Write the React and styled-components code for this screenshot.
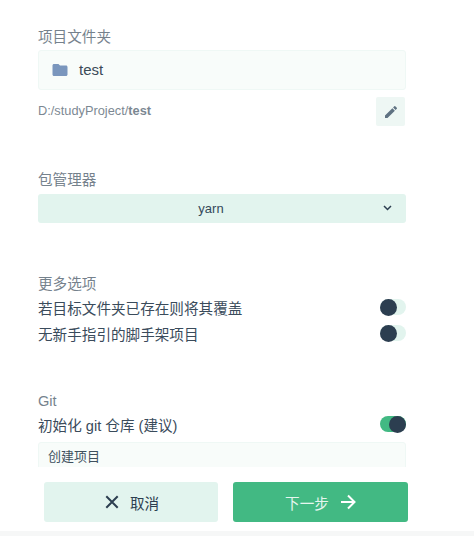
import React from 'react';
import styled, { createGlobalStyle } from 'styled-components';

const Global = createGlobalStyle`
  html, body { margin: 0; padding: 0; background: #fff; }
  body { font-family: "Liberation Sans", "Noto Sans CJK SC", sans-serif; color: #2c3e50; }
  * { box-sizing: border-box; }
`;

const Page = styled.div`
  width: 474px;
  height: 536px;
  display: flex;
  flex-direction: column;
  overflow: hidden;
`;
const Scroll = styled.div`
  height: 467px;
  overflow: hidden;
  padding: 27px 68px 0 38px;
  flex: none;
`;
const Section = styled.section`
  margin-bottom: ${p => p.$gap}px;
`;
const Label = styled.div`
  font-size: 14.6px;
  line-height: 20px;
  color: #2c3e50;
  opacity: 0.65;
  margin-bottom: ${p => p.$mb ?? 3}px;
`;
const FolderBox = styled.div`
  height: 40px;
  background: #f8fcfa;
  border: 1px solid #eff8f5;
  border-radius: 3px;
  display: flex;
  align-items: center;
  padding: 0 0 1px 12px;
  gap: 10px;
  font-size: 15px;
  color: #3a4a57;
`;
const PathRow = styled.div`
  display: flex;
  align-items: center;
  justify-content: space-between;
  margin-top: 7px;
  height: 29px;
  padding-right: 1px;
`;
const PathText = styled.div`
  font-size: 12.8px;
  color: #2c3e50;
  opacity: 0.62;
  padding-bottom: 2px;
  b { font-weight: 700; }
`;
const EditButton = styled.div`
  width: 29px;
  height: 29px;
  background: #eef7f4;
  border-radius: 2px;
  display: flex;
  align-items: center;
  justify-content: center;
`;
const Select = styled.div`
  position: relative;
  height: 29px;
  background: #e2f4ee;
  border-radius: 3px;
  display: flex;
  align-items: center;
  justify-content: center;
  padding-right: 22px;
  font-size: 13px;
  color: #34495a;
  svg { position: absolute; right: 14px; top: 10px; }
`;
const OptionRow = styled.div`
  display: flex;
  align-items: center;
  justify-content: space-between;
  height: 26px;
  font-size: 14.6px;
  color: #3a4b5b;
`;
const Track = styled.div`
  position: relative;
  width: 26px;
  height: 16px;
  border-radius: 8px;
  background: ${p => (p.$on ? '#42b983' : '#e2f4ee')};
`;
const Knob = styled.div`
  position: absolute;
  top: -0.5px;
  left: ${p => (p.$on ? '9px' : '0')};
  width: 17px;
  height: 17px;
  border-radius: 50%;
  background: #2c3e50;
`;
const CommitBox = styled.div`
  height: 40px;
  margin-top: 5px;
  background: #f8fcfa;
  border: 1px solid #eff8f5;
  border-radius: 3px;
  padding: 5px 9px;
  font-size: 13px;
  line-height: 18px;
  color: #3f505e;
`;
const Footer = styled.div`
  flex: none;
  height: 64px;
  padding: 15px 66px 0 44px;
  display: flex;
  gap: 15px;
  align-items: flex-start;
`;
const Button = styled.div`
  height: 40px;
  border-radius: 3px;
  flex: 0 0 ${p => p.$w}px;
  display: flex;
  align-items: center;
  justify-content: center;
  gap: 11px;
  padding-left: ${p => (p.$primary ? 0 : 2)}px;
  font-size: 14.6px;
  background: ${p => (p.$primary ? '#42b983' : '#e2f4ee')};
  color: ${p => (p.$primary ? '#e6f6ef' : '#2c3e50')};
`;
const BottomStrip = styled.div`
  flex: none;
  height: 5px;
  background: #f6f7f7;
`;

const Folder = () => (
  <svg width="18" height="18" viewBox="0 0 24 24" fill="#7a96bd"><path d="M10 4H4c-1.1 0-2 .9-2 2v12c0 1.1.9 2 2 2h16c1.1 0 2-.9 2-2V8c0-1.1-.9-2-2-2h-8l-2-2z" /></svg>
);
const Pencil = () => (
  <svg width="16" height="16" viewBox="0 0 24 24" fill="#5f7282"><path d="M3 17.25V21h3.75L17.81 9.94l-3.75-3.75L3 17.25zM20.71 7.04a1 1 0 0 0 0-1.41l-2.34-2.34a1 1 0 0 0-1.41 0l-1.83 1.83 3.75 3.75 1.83-1.83z" /></svg>
);
const Chevron = () => (
  <svg width="9" height="8" viewBox="0 0 9 8" fill="none" stroke="#2c3e50" strokeWidth="1.5"><path d="M1 2l3.5 3.5L8 2" /></svg>
);
const Cross = () => (
  <svg width="14" height="14" viewBox="0 0 14 14" fill="none" stroke="#2c3e50" strokeWidth="2"><path d="M1.3 1.3l11.4 11.4M12.7 1.3L1.3 12.7" /></svg>
);
const Arrow = () => (
  <svg width="16" height="16" viewBox="0 0 16 16" fill="none" stroke="#fff" strokeWidth="2"><path d="M1 8h13.5M8 1.5L14.5 8 8 14.5" /></svg>
);

const Toggle = ({ on }) => (
  <Track $on={on}><Knob $on={on} /></Track>
);

export default function App() {
  return (
    <Page>
      <Global />
      <Scroll>
        <Section $gap={44}>
          <Label>项目文件夹</Label>
          <FolderBox><Folder />test</FolderBox>
          <PathRow>
            <PathText>D:/studyProject/<b>test</b></PathText>
            <EditButton><Pencil /></EditButton>
          </PathRow>
        </Section>
        <Section $gap={51}>
          <Label $mb={4}>包管理器</Label>
          <Select>yarn<Chevron /></Select>
        </Section>
        <Section $gap={45}>
          <Label $mb={0}>更多选项</Label>
          <OptionRow>若目标文件夹已存在则将其覆盖<Toggle /></OptionRow>
          <OptionRow>无新手指引的脚手架项目<Toggle /></OptionRow>
        </Section>
        <Section $gap={0}>
          <Label $mb={0}>Git</Label>
          <OptionRow>初始化 git 仓库 (建议)<Toggle on /></OptionRow>
          <CommitBox>创建项目</CommitBox>
        </Section>
      </Scroll>
      <Footer>
        <Button $w={174}><Cross />取消</Button>
        <Button $w={175} $primary>下一步<Arrow /></Button>
      </Footer>
      <BottomStrip />
    </Page>
  );
}
